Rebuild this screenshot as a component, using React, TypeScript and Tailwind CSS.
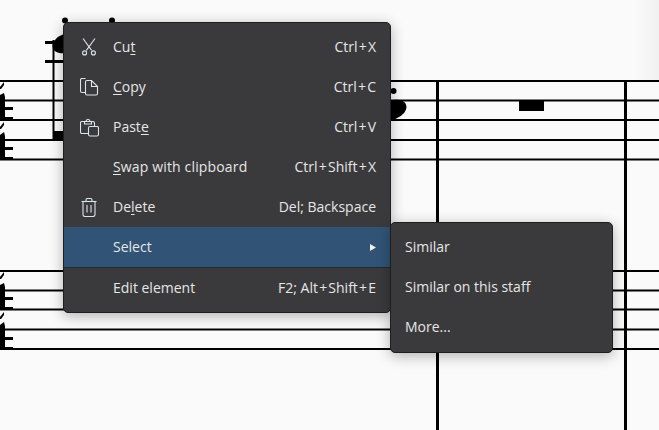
import React from 'react';

const FONT = "font-['Open_Sans','Noto_Sans',sans-serif]";

// underlined mnemonic letter
function U({ children }: { children: React.ReactNode }) {
  return <span className="underline underline-offset-[2px] decoration-1">{children}</span>;
}

// the plus sign sits wider in the reference font
function Shortcut({ text }: { text: string }) {
  const parts = text.split('+');
  return (
    <span className="ml-auto pr-[14px] pb-[2px]">
      {parts.map((part, i) => (
        <React.Fragment key={i}>
          {i > 0 && <span className="mx-[1.2px]">+</span>}
          {part}
        </React.Fragment>
      ))}
    </span>
  );
}

function CutIcon() {
  return (
    <svg width="18" height="18" viewBox="0 0 18 18" fill="none" stroke="currentColor" strokeWidth="1.1">
      <path d="M3 .5 L11.6 12.4" />
      <path d="M15 .5 L6.4 12.4" />
      <circle cx="4.6" cy="14.9" r="2" />
      <circle cx="13.4" cy="14.9" r="2" />
    </svg>
  );
}

function CopyIcon() {
  return (
    <svg width="19" height="18" viewBox="0 0 19 18" fill="none" stroke="currentColor" strokeWidth="1.1">
      <path d="M5.5 14.5 H2 a1.5 1.5 0 0 1 -1.5 -1.5 V2 a1.5 1.5 0 0 1 1.5 -1.5 H5.5" />
      <path d="M5.5 15 V4 a1.5 1.5 0 0 1 1.5 -1.5 H11.5 L17.5 8.5 V15.5 a1.5 1.5 0 0 1 -1.5 1.5 H7 a1.5 1.5 0 0 1 -1.5 -1.5 Z" />
      <path d="M11.5 2.5 V8.5 H17.5" />
    </svg>
  );
}

function PasteIcon() {
  return (
    <svg width="19" height="19" viewBox="0 0 19 19" fill="none" stroke="currentColor" strokeWidth="1.1">
      <path d="M8.5 15.5 H2 a1.5 1.5 0 0 1 -1.5 -1.5 V5 a1.5 1.5 0 0 1 1.5 -1.5 H13 a1.5 1.5 0 0 1 1.5 1.5 V8" />
      <path d="M4.5 3.5 H6 a2 2 0 0 1 4 0 H11.5 V6 H4.5 Z" />
      <rect x="8.5" y="8.5" width="10" height="9.5" rx="1.5" />
    </svg>
  );
}

function TrashIcon() {
  return (
    <svg width="16" height="19" viewBox="0 0 16 19" fill="none" stroke="currentColor" strokeWidth="1.1">
      <path d="M.5 3.5 H15.5" />
      <path d="M5 3.5 V2 a1.5 1.5 0 0 1 1.5 -1.5 H9.5 A1.5 1.5 0 0 1 11 2 V3.5" />
      <path d="M2 3.5 V16.5 a2 2 0 0 0 2 2 H12 a2 2 0 0 0 2 -2 V3.5" />
      <path d="M6 7 V14.5 M10 7 V14.5" />
    </svg>
  );
}

function ScoreStaff() {
  return (
    <svg width="659" height="430" viewBox="0 0 659 430" className="absolute left-0 top-0">
      {/* staff lines */}
      {[81, 100.5, 120, 140, 159.5, 271, 290.5, 309.5, 329.5, 349].map(y => (
        <rect key={y} x="0" y={y - 1} width="659" height="2" fill="#000" />
      ))}
      {/* barlines */}
      <rect x="436" y="81" width="3" height="349" fill="#000" />
      <rect x="624" y="81" width="3" height="349" fill="#000" />
      {/* ledger lines, stem, note heads */}
      <rect x="45" y="41" width="20" height="3" fill="#000" />
      <rect x="45" y="60" width="20" height="3" fill="#000" />
      <rect x="52.5" y="40" width="2" height="100" fill="#000" />
      <ellipse cx="67" cy="43" rx="15" ry="9.5" transform="rotate(-20 67 43)" fill="#000" />
      <rect x="53" y="131" width="14" height="9" fill="#000" />
      <circle cx="65" cy="20.5" r="3" fill="#000" />
      <circle cx="112" cy="20.5" r="3" fill="#000" />
      <circle cx="393.5" cy="91" r="3" fill="#000" />
      <ellipse cx="392" cy="110" rx="15" ry="9.5" transform="rotate(-20 392 110)" fill="#000" />
      {/* rest */}
      <rect x="519" y="101" width="25" height="10" fill="#000" />
      {/* clef pieces */}
      {[81, 271].map(y => (
        <g key={y} fill="#000">
          <path d={`M0 ${y + 6} L4 ${y + 1} V${y + 4} L1 ${y + 8} H0 Z`} />
          <path d={`M0 ${y + 14} L4 ${y + 12} L5 ${y + 16} V${y + 36} L3 ${y + 39} H0 Z`} />
          <rect x="0" y={y + 26} width="13" height="3" />
          <rect x="0" y={y + 36} width="13" height="3" />
          <path d={`M0 ${y + 46} L4 ${y + 41} V${y + 44} L1 ${y + 48} H0 Z`} />
          <path d={`M0 ${y + 54} L4 ${y + 51} L5 ${y + 55} V${y + 78} H0 Z`} />
          <rect x="0" y={y + 66} width="13" height="3" />
          <rect x="0" y={y + 76} width="13" height="3" />
        </g>
      ))}
    </svg>
  );
}

const items = [
  { icon: <CutIcon />, label: <>Cu<U>t</U></>, key: 'Ctrl+X' },
  { icon: <CopyIcon />, label: <><U>C</U>opy</>, key: 'Ctrl+C' },
  { icon: <PasteIcon />, label: <>Past<U>e</U></>, key: 'Ctrl+V' },
  { icon: null, label: <span className="tracking-[0.15px]"><U>S</U>wap with clipboard</span>, key: 'Ctrl+Shift+X' },
  { icon: <TrashIcon />, label: <>De<U>l</U>ete</>, key: 'Del; Backspace' },
];

export default function App() {
  return (
    <div className={`relative w-[659px] h-[430px] overflow-hidden bg-[#fafafa] text-[14px] text-[#e6e6e6] ${FONT}`}>
      <ScoreStaff />
      <div className="absolute right-0 top-0 h-[80px] w-[24px] bg-gradient-to-r from-transparent to-[#f1f1f1]" />

      {/* context menu */}
      <div className="absolute left-[63px] top-[22px] w-[328px] h-[291px] py-[4px] rounded-[5px] border border-[#1e1e1e] bg-[#3a3a3c] shadow-[0_3px_14px_rgba(0,0,0,0.3)]">
        {items.map((item, i) => (
          <div key={i} className="flex items-center h-10">
            <div className="w-[49px] flex justify-center text-[#dce4ec] pl-[1px]">{item.icon}</div>
            <span className="pb-[2px]">{item.label}</span>
            <Shortcut text={item.key} />
          </div>
        ))}
        <div className="flex items-center h-[41px] bg-[#315476] border-b border-[#1e2a36]">
          <span className="pl-[49px] pb-[1px]">Select</span>
          <span className="ml-auto pr-[14px]">
            <svg width="6" height="7" viewBox="0 0 6 7" className="fill-[#f0f0f0]"><path d="M0 0 L6 3.5 L0 7 Z" /></svg>
          </span>
        </div>
        <div className="flex items-center h-10">
          <span className="pl-[49px] pb-[2px]">Edit element</span>
          <Shortcut text="F2; Alt+Shift+E" />
        </div>
      </div>

      {/* Select submenu */}
      <div className="absolute left-[390px] top-[222px] w-[223px] h-[131px] py-[4px] rounded-[5px] border border-[#1e1e1e] bg-[#3a3a3c] shadow-[0_3px_14px_rgba(0,0,0,0.3)]">
        {['Similar', 'Similar on this staff', 'More...'].map(label => (
          <div key={label} className="flex items-center h-10 pl-[14px] pb-[2px]">{label}</div>
        ))}
      </div>
    </div>
  );
}
